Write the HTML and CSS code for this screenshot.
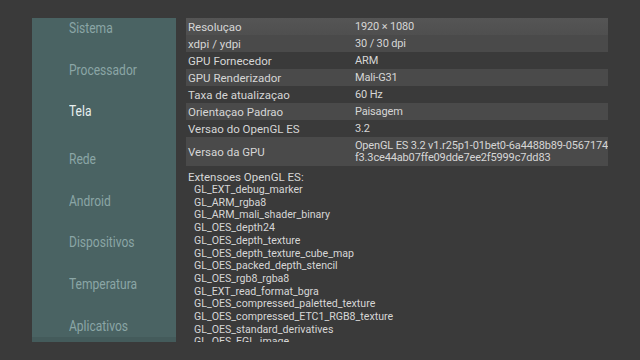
FILE: index.html
```html
<!DOCTYPE html>
<html lang="pt">
<head>
    <meta charset="UTF-8">
    <title>Info do dispositivo</title>
    <link rel="stylesheet" href="styles.css">
</head>
<body>
    <!-- Menu lateral -->
    <nav class="sidebar">
        <div class="menu-item"><span>Sistema</span></div>
        <div class="menu-item"><span>Processador</span></div>
        <div class="menu-item active"><span>Tela</span></div>
        <div class="menu-item gap"><span>Rede</span></div>
        <div class="menu-item"><span>Android</span></div>
        <div class="menu-item"><span>Dispositivos</span></div>
        <div class="menu-item"><span>Temperatura</span></div>
        <div class="menu-item"><span>Aplicativos</span></div>
    </nav>

    <!-- Detalhes da tela -->
    <main class="content">
        <div class="info-table">
            <div class="row first"><div class="label">Resoluçao</div><div class="value">1920 × 1080</div></div>
            <div class="row shade"><div class="label">xdpi / ydpi</div><div class="value">30 / 30 dpi</div></div>
            <div class="row"><div class="label">GPU Fornecedor</div><div class="value">ARM</div></div>
            <div class="row shade"><div class="label">GPU Renderizador</div><div class="value">Mali-G31</div></div>
            <div class="row"><div class="label">Taxa de atualizaçao</div><div class="value">60 Hz</div></div>
            <div class="row shade"><div class="label">Orientaçao Padrao</div><div class="value">Paisagem</div></div>
            <div class="row"><div class="label">Versao do OpenGL ES</div><div class="value">3.2</div></div>
            <div class="row shade tall"><div class="label">Versao da GPU</div><div class="value">OpenGL ES 3.2 v1.r25p1-01bet0-6a4488b89-0567174<br>f3.3ce44ab07ffe09dde7ee2f5999c7dd83</div></div>
        </div>

        <div class="extensions">
            <div class="ext-title">Extensoes OpenGL ES:</div>
            <ul class="ext-list">
                <li>GL_EXT_debug_marker</li>
                <li>GL_ARM_rgba8</li>
                <li>GL_ARM_mali_shader_binary</li>
                <li>GL_OES_depth24</li>
                <li>GL_OES_depth_texture</li>
                <li>GL_OES_depth_texture_cube_map</li>
                <li>GL_OES_packed_depth_stencil</li>
                <li>GL_OES_rgb8_rgba8</li>
                <li>GL_EXT_read_format_bgra</li>
                <li>GL_OES_compressed_paletted_texture</li>
                <li>GL_OES_compressed_ETC1_RGB8_texture</li>
                <li>GL_OES_standard_derivatives</li>
                <li>GL_OES_EGL_image</li>
            </ul>
        </div>
    </main>
</body>
</html>
```
FILE: styles.css
```css
/* Basic Reset */
* {
    margin: 0;
    padding: 0;
    box-sizing: border-box;
}

body {
    font-family: 'Roboto', 'Liberation Sans', sans-serif;
    background-color: #3a3a3a;
    color: #d6d6d6;
    width: 640px;
    height: 360px;
    overflow: hidden;
    display: flex;
    align-items: flex-start;
    padding: 18px 0 0 32px;
    gap: 10px;
}

/* Sidebar Styles */
.sidebar {
    width: 144px;
    height: 324px;
    background-color: #4a6363;
    border-bottom: 5px solid #445b5b;
    overflow: hidden;
    padding-top: 2px;
}

.menu-item {
    height: 41.7px;
    padding-left: 37px;
    font-size: 14px;
    color: #8ba6a6;
}

.menu-item span {
    display: inline-block;
    transform: scaleX(0.86);
    transform-origin: left center;
}

.menu-item.active {
    color: #e8f0f0;
}

.menu-item.gap {
    margin-top: 6px;
}

/* Content Styles */
.content {
    width: 422px;
    height: 324px;
    overflow: hidden;
}

.row {
    display: flex;
    height: 17px;
    align-items: center;
    padding-top: 1px;
}

.row.first {
    background: linear-gradient(#555555, #4f4f4f);
}

.row.shade {
    background-color: #4a4a4a;
}

.row.tall {
    height: 29px;
}

.label {
    width: 169px;
    padding-left: 2px;
    font-size: 11.5px;
}

.value {
    flex: 1;
    font-size: 11px;
    line-height: 12px;
    letter-spacing: -0.15px;
    white-space: nowrap;
}

.extensions {
    padding: 5px 2px 0;
}

.ext-title {
    font-size: 11.5px;
    line-height: 13px;
}

.ext-list {
    list-style: none;
    padding-left: 6px;
    font-size: 10.6px;
    line-height: 12.7px;
}
```
